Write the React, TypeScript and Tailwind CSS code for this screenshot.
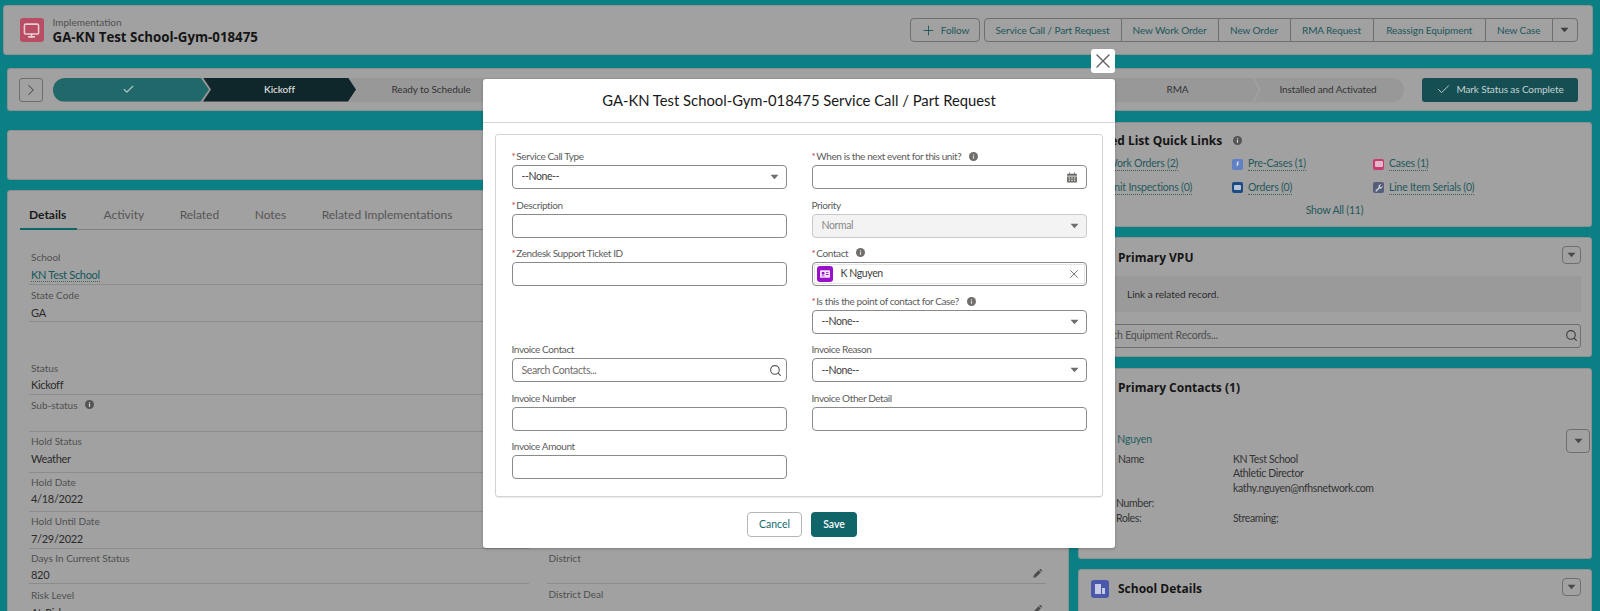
import React from "react";
import { Check, ChevronRight, Monitor, Plus, Search, X } from "lucide-react";

const Caret = ({ className = "" }: { className?: string }) => (
  <svg viewBox="0 0 10 6" className={`h-[6px] w-[9px] ${className}`} fill="currentColor">
    <path d="M0.6 0.4h8.8L5 5.6z" />
  </svg>
);

const InfoDot = ({ className = "" }: { className?: string }) => (
  <svg viewBox="0 0 12 12" className={`h-[9px] w-[9px] shrink-0 ${className}`}>
    <circle cx="6" cy="6" r="6" fill="currentColor" />
    <rect x="5.2" y="5.2" width="1.6" height="3.8" fill="#d8d8d8" />
    <rect x="5.2" y="3" width="1.6" height="1.5" fill="#d8d8d8" />
  </svg>
);

const Pencil = () => (
  <svg viewBox="0 0 12 12" className="h-[10px] w-[10px] text-[#4a4a4a]" fill="currentColor">
    <path d="M8.6 0.8l2.6 2.6-1.2 1.2-2.6-2.6zM6.7 2.7l2.6 2.6L3.4 11.2 0.4 11.8l.6-3z" />
  </svg>
);

const CalendarIcon = () => (
  <svg viewBox="0 0 12 12" className="h-[11px] w-[10px] text-[#706e6b]" fill="currentColor">
    <path d="M2.5 0h1.2v1.4h4.6V0h1.2v1.4H11a1 1 0 0 1 1 1V4H0V2.4a1 1 0 0 1 1-1h1.5z" />
    <path d="M0 4.8h12V11a1 1 0 0 1-1 1H1a1 1 0 0 1-1-1zm2 1.2v1.3h1.6V6zm3.2 0v1.3h1.6V6zm3.2 0v1.3H10V6zM2 8.6v1.3h1.6V8.6zm3.2 0v1.3h1.6V8.6zm3.2 0v1.3H10V8.6z" fillRule="evenodd" />
  </svg>
);

const MenuButton = ({ className }: { className: string }) => (
  <button className={`flex items-center justify-center rounded-[4px] border border-[#6e6e6e] text-[#4a4a4a] ${className}`}>
    <Caret />
  </button>
);

const Field = ({ label, value, info, link, pencil, h, top = "pt-[3px]" }: { label: string; value?: string; info?: boolean; link?: boolean; pencil?: boolean; h: string; top?: string }) => (
  <div className={`relative border-b border-[#8c8c8c] px-[2px] ${h} ${top}`}>
    <div className="flex items-center gap-[7px] text-[10px] leading-[14px] text-[#4f4f4f]">
      {label}
      {info && <InfoDot className="text-[#555555]" />}
    </div>
    {value && (
      <div className={`mt-[2.5px] text-[11px] leading-[16px] tracking-[-0.3px] ${link ? "text-[#12585c]" : "text-[#2b2b2b]"}`}>
        <span className={link ? "border-b border-dotted border-[#3e5f60]" : ""}>{value}</span>
      </div>
    )}
    {pencil && (
      <span className="absolute right-[3px] bottom-[5px]">
        <Pencil />
      </span>
    )}
  </div>
);

const QuickLink = ({ color, label, glyph }: { color: string; label: string; glyph: React.ReactNode }) => (
  <div className="flex h-[23.5px] items-center gap-[5px]">
    <span className={`flex h-[11px] w-[11px] shrink-0 items-center justify-center rounded-[2px] ${color}`}>{glyph}</span>
    <span className="border-b border-dotted border-[#3e5f60] text-[10.5px] leading-[13px] tracking-[-0.2px] text-[#25585b]">{label}</span>
  </div>
);

const FormLabel = ({ text, required, info }: { text: string; required?: boolean; info?: boolean }) => (
  <div className="flex h-[24.3px] items-end pb-[3px] text-[10px] leading-[12px] tracking-[-0.4px] text-[#5c5c5c]">
    {required && <span className="mr-[1px] text-[#c23934]">*</span>}
    {text}
    {info && <InfoDot className="mb-[1.5px] ml-[8px] text-[#706e6b]" />}
  </div>
);

const TextInput = () => <div className="h-[24px] rounded-[4px] border border-[#8a8a8a] bg-white" />;

const SelectInput = ({ value, disabled }: { value: string; disabled?: boolean }) => (
  <div className={`flex h-[24px] items-center justify-between rounded-[4px] border pr-[7px] pl-[9px] text-[10.5px] tracking-[-0.4px] ${disabled ? "border-[#c9c9c9] bg-[#f3f3f3] text-[#8a8a8a]" : "border-[#8a8a8a] bg-white text-[#3e3e3c]"}`}>
    {value}
    <Caret className="text-[#706e6b]" />
  </div>
);

const FormField = ({ label, required, info, children }: { label: string; required?: boolean; info?: boolean; children: React.ReactNode }) => (
  <div className="h-[48.3px]">
    <FormLabel text={label} required={required} info={info} />
    {children}
  </div>
);

const actions = [
  { label: "Service Call / Part Request", w: "w-[137px]" },
  { label: "New Work Order", w: "w-[97px]" },
  { label: "New Order", w: "w-[72px]" },
  { label: "RMA Request", w: "w-[83px]" },
  { label: "Reassign Equipment", w: "w-[112.5px]" },
  { label: "New Case", w: "w-[66.5px]" },
];

const Modal = () => (
  <div className="absolute top-[79px] left-[483px] w-[632px]">
    <button className="absolute -top-[30px] right-0 flex h-[24px] w-[24px] items-center justify-center rounded-[3px] bg-white text-[#5f5f5f]">
      <X className="h-[24px] w-[24px] shrink-0" strokeWidth={1.4} />
    </button>
    <div className="h-[469px] rounded-[3px] bg-white shadow-[0_1px_3px_rgba(0,0,0,0.25)]">
      <div className="flex h-[43.5px] items-center justify-center border-b border-[#d4d4d4] text-[14.8px] text-[#181818]">
        GA-KN Test School-Gym-018475 Service Call / Part Request
      </div>
      <div className="mx-[12px] mt-[11.5px] h-[363px] rounded-[3px] border border-[#d4d4d4] pt-[6px] pr-[15px] pl-[15.5px] shadow-[0_1px_1px_rgba(0,0,0,0.08)]">
        <div className="grid grid-cols-2 gap-x-[24.5px]">
          <FormField label="Service Call Type" required>
            <SelectInput value="--None--" />
          </FormField>
          <FormField label="When is the next event for this unit?" required info>
            <div className="flex h-[24px] items-center justify-end rounded-[4px] border border-[#8a8a8a] pr-[9px]">
              <CalendarIcon />
            </div>
          </FormField>
          <FormField label="Description" required>
            <TextInput />
          </FormField>
          <FormField label="Priority">
            <SelectInput value="Normal" disabled />
          </FormField>
          <FormField label="Zendesk Support Ticket ID" required>
            <TextInput />
          </FormField>
          <FormField label="Contact" required info>
            <div className="flex h-[24px] items-center rounded-[4px] border border-[#8a8a8a] p-[1px]">
              <div className="flex h-full flex-1 items-center border border-[#e5e5e5] pr-[3px] pl-[2px] text-[10.5px] tracking-[-0.4px] text-[#3e3e3c]">
                <span className="flex h-[16px] w-[16px] items-center justify-center rounded-[3px] bg-[#9a10c9]">
                  <svg viewBox="0 0 12 9" className="h-[8px] w-[10px]" fill="#f2e3f7">
                    <path d="M1 0h10a1 1 0 0 1 1 1v7a1 1 0 0 1-1 1H1a1 1 0 0 1-1-1V1a1 1 0 0 1 1-1zm1.2 2v3h3V2zm5 .4v1h3v-1zm0 2.2v1h3v-1zM2 6.2v1h3.5v-1z" fillRule="evenodd" />
                  </svg>
                </span>
                <span className="ml-[8px] flex-1">K Nguyen</span>
                <X className="h-[14px] w-[14px] text-[#706e6b]" strokeWidth={1.6} />
              </div>
            </div>
          </FormField>
          <div />
          <FormField label="Is this the point of contact for Case?" required info>
            <SelectInput value="--None--" />
          </FormField>
          <FormField label="Invoice Contact">
            <div className="flex h-[24px] items-center justify-between rounded-[4px] border border-[#8a8a8a] pr-[4px] pl-[9px] text-[10.5px] tracking-[-0.4px] text-[#706e6b]">
              Search Contacts...
              <Search className="h-[13px] w-[13px] text-[#555555]" strokeWidth={2} />
            </div>
          </FormField>
          <FormField label="Invoice Reason">
            <SelectInput value="--None--" />
          </FormField>
          <FormField label="Invoice Number">
            <TextInput />
          </FormField>
          <FormField label="Invoice Other Detail">
            <TextInput />
          </FormField>
          <FormField label="Invoice Amount">
            <TextInput />
          </FormField>
        </div>
      </div>
      <div className="mt-[15px] flex justify-center gap-[9.5px] pl-[6px]">
        <button className="h-[25px] w-[54.5px] rounded-[4px] border border-[#b5b5b5] text-[10.5px] text-[#146a6e]">Cancel</button>
        <button className="h-[25px] w-[45.5px] rounded-[4px] bg-[#0f6568] text-[10.5px] font-semibold text-white">Save</button>
      </div>
    </div>
  </div>
);

export default function App() {
  return (
    <div className="relative h-[611px] overflow-hidden bg-[#0a8085] font-['Lato',sans-serif]">
      {/* record header */}
      <div className="mr-[7px] ml-[3px] pt-[5px]">
        <div className="flex h-[50px] items-center justify-between rounded-[3px] border border-[#8f8f8f] bg-[#a1a1a1] pr-[14.5px] pl-[15.5px]">
          <div className="flex items-center gap-[9px]">
            <span className="flex h-[24px] w-[24px] items-center justify-center rounded-[3px] bg-[#b84d63]">
              <Monitor className="h-[17px] w-[17px] text-[#e6cfd4]" strokeWidth={2.2} />
            </span>
            <div>
              <div className="text-[10px] leading-[14px] text-[#4f4f4f]">Implementation</div>
              <div className="font-['Open_Sans',sans-serif] text-[13.3px] leading-[16px] font-bold text-[#151515]">GA-KN Test School-Gym-018475</div>
            </div>
          </div>
          <div className="flex h-[24px] items-stretch text-[10px] tracking-[-0.1px] text-[#205659]">
            <button className="mr-[3.5px] flex w-[70px] items-center justify-center gap-[5px] rounded-[4px] border border-[#6e6e6e]">
              <Plus className="h-[15px] w-[15px]" strokeWidth={1.5} />
              Follow
            </button>
            <div className="flex rounded-[4px] border border-[#6e6e6e]">
              {actions.map((a) => (
                <button key={a.label} className={`border-r border-[#6e6e6e] ${a.w}`}>
                  {a.label}
                </button>
              ))}
              <button className="flex w-[24px] items-center justify-center text-[#3f3f3f]">
                <Caret />
              </button>
            </div>
          </div>
        </div>
      </div>

      {/* status path */}
      <div className="mt-[13px] mr-[8px] ml-[7px]">
        <div className="flex h-[43px] items-center rounded-[3px] border border-[#8f8f8f] bg-[#a1a1a1] pr-[13px] pl-[11px]">
          <button className="flex h-[24px] w-[24px] items-center justify-center rounded-[3px] border border-[#6e6e6e] text-[#4a4a4a]">
            <ChevronRight className="h-[18px] w-[18px]" strokeWidth={1.4} />
          </button>
          <div className="ml-[9.5px] flex h-[24px] w-[1351px] overflow-hidden rounded-full bg-[#989898] text-[10px] tracking-[-0.1px]">
            <div className="flex w-[156.5px] shrink-0 items-center justify-center bg-[#20686a] pr-[4px] text-[#b6cccc] [clip-path:polygon(0_0,148px_0,156.5px_50%,148px_100%,0_100%)]">
              <Check className="h-[13px] w-[13px]" strokeWidth={2} />
            </div>
            <div className="-ml-[6px] flex w-[153px] shrink-0 items-center justify-center bg-[#0f272b] font-semibold text-[#d8d8d8] [clip-path:polygon(0_0,145px_0,153px_50%,145px_100%,0_100%,8px_50%)]">
              Kickoff
            </div>
            <div className="flex w-[150px] shrink-0 items-center justify-center text-[#333333]">Ready to Schedule</div>
            <div className="flex-1" />
            <div className="flex w-[150px] shrink-0 items-center justify-center text-[#333333]">RMA</div>
            <div className="relative flex w-[151px] shrink-0 items-center justify-center text-[#333333]">
              <span className="absolute top-0 left-0 h-full w-[8px] bg-[#a1a1a1] [clip-path:polygon(0_0,2px_0,8px_50%,2px_100%,0_100%,6px_50%)]" />
              Installed and Activated
            </div>
          </div>
          <button className="ml-auto flex h-[24px] w-[156px] items-center justify-center gap-[5px] rounded-[3px] bg-[#164f53] text-[10px] tracking-[-0.1px] text-[#c5d2d2]">
            <Check className="h-[15px] w-[15px]" strokeWidth={1.5} />
            Mark Status as Complete
          </button>
        </div>
      </div>

      <div className="mt-[10.5px] mr-[8px] ml-[7px] flex gap-[9px]">
        {/* left column */}
        <div className="w-[1062px] shrink-0 pt-[8.5px]">
          <div className="h-[50px] rounded-[3px] border border-[#8f8f8f] bg-[#a1a1a1]" />
          <div className="mt-[10px] h-[500px] rounded-[3px] border border-[#8f8f8f] bg-[#a1a1a1] px-[12px] pt-[12px]">
            <div className="flex h-[27px] items-start gap-[35.5px] border-b border-[#808080] pt-[4px] text-[12px] leading-[16px] text-[#555555]">
              <span className="h-[23px] w-[57px] border-b-[2px] border-[#0f6568] pl-[9px] font-bold text-[#1a1a1a]">Details</span>
              <span className="-ml-[9px]">Activity</span>
              <span>Related</span>
              <span>Notes</span>
              <span>Related Implementations</span>
            </div>
            <div className="mt-[15px] grid grid-cols-2 gap-x-[18px] pr-[10px] pl-[9px]">
              <div>
                <Field h="h-[40px]" top="pt-[5px]" label="School" value="KN Test School" link />
                <Field h="h-[36.5px]" label="State Code" value="GA" />
                <div className="h-[34px]" />
                <Field h="h-[39px]" top="pt-[5px]" label="Status" value="Kickoff" />
                <Field h="h-[37.5px]" label="Sub-status" info />
                <Field h="h-[40.5px]" top="pt-[2px]" label="Hold Status" value="Weather" />
                <Field h="h-[39px]" top="pt-[2px]" label="Hold Date" value="4/18/2022" />
                <Field h="h-[37px]" top="pt-[2.5px]" label="Hold Until Date" value="7/29/2022" />
                <Field h="h-[35.5px]" top="pt-[2px]" label="Days In Current Status" value="820" />
                <Field h="h-[36px]" top="pt-[4px]" label="Risk Level" value="At-Risk" />
              </div>
              <div className="pt-[303px]">
                <Field h="h-[35.5px]" label="District" pencil />
                <Field h="h-[36px]" label="District Deal" pencil />
              </div>
            </div>
          </div>
        </div>

        {/* right column */}
        <div className="flex-1">
          <div className="h-[105px] rounded-[3px] border border-[#8f8f8f] bg-[#a1a1a1] pt-[9px] pl-[12px]">
            <div className="-ml-[12px] flex items-center gap-[11px] font-['Open_Sans',sans-serif] text-[12px] leading-[18px] font-bold text-[#151515]">
              Related List Quick Links
              <InfoDot className="text-[#555555]" />
            </div>
            <div className="mt-[3px] grid grid-cols-[141px_141px_1fr]">
              <QuickLink color="bg-[#3f6b8e]" label="Work Orders (2)" glyph={null} />
              <QuickLink color="bg-[#5f80c4]" label="Pre-Cases (1)" glyph={<span className="h-[6px] w-[3px] bg-[#d6dcec] [clip-path:polygon(60%_0,100%_0,70%_40%,100%_40%,20%_100%,40%_55%,0_55%)]" />} />
              <QuickLink color="bg-[#c93a72]" label="Cases (1)" glyph={<span className="h-[6px] w-[8px] rounded-[1px] bg-[#e2b8c8]" />} />
              <QuickLink color="bg-[#3f6b8e]" label="Unit Inspections (0)" glyph={null} />
              <QuickLink color="bg-[#1d4c84]" label="Orders (0)" glyph={<span className="h-[5px] w-[7px] rounded-[1px] bg-[#b8c5d6]" />} />
              <QuickLink color="bg-[#565e7c]" label="Line Item Serials (0)" glyph={<svg viewBox="0 0 12 12" className="h-[8px] w-[8px]" fill="#cdd0da"><path d="M11.5 3.4a3.4 3.4 0 0 1-4.6 3.2L2.8 11a1.2 1.2 0 0 1-1.8-1.8l4.4-4.1A3.4 3.4 0 0 1 9.4.6L7.4 2.7l.4 1.7 1.7.4 2-2z" /></svg>} />
            </div>
            <div className="mt-[3px] pr-[13px] text-center text-[10.5px] tracking-[-0.2px] text-[#25585b]">Show All (11)</div>
          </div>

          <div className="relative mt-[10.5px] h-[120px] rounded-[3px] border border-[#8f8f8f] bg-[#a1a1a1] px-[10px] pt-[11px]">
            <div className="pl-[29px] font-['Open_Sans',sans-serif] text-[12px] leading-[18px] font-bold text-[#151515]">Primary VPU</div>
            <MenuButton className="absolute top-[7.5px] right-[10px] h-[18px] w-[19px]" />
            <div className="mt-[9px] flex h-[36px] items-center bg-[#9a9a9a] pl-[38px] text-[10px] text-[#2b2b2b]">Link a related record.</div>
            <div className="mt-[11.5px] flex h-[24px] items-center justify-between rounded-[3px] border border-[#6e6e6e] pr-[2px] pl-[3px] text-[10.5px] tracking-[-0.2px] text-[#4f4f4f]">
              Search Equipment Records...
              <Search className="h-[13px] w-[13px] text-[#3a3a3a]" strokeWidth={2} />
            </div>
          </div>

          <div className="relative mt-[10.5px] h-[191px] rounded-[3px] border border-[#8f8f8f] bg-[#a1a1a1] pt-[10px] pl-[39px]">
            <div className="font-['Open_Sans',sans-serif] text-[12px] leading-[18px] font-bold text-[#151515]">Primary Contacts (1)</div>
            <MenuButton className="absolute top-[60px] right-[1px] h-[24px] w-[24px]" />
            <div className="mt-[34px] -ml-[10px] text-[10.5px] leading-[16px] tracking-[-0.2px] text-[#1e5c5f]">K Nguyen</div>
            <div className="mt-[5px] grid grid-cols-[115px_1fr] text-[10.5px] leading-[14.8px] tracking-[-0.35px] text-[#333333]">
              <div>Name</div>
              <div>
                KN Test School
                <br />
                Athletic Director
                <br />
                kathy.nguyen@nfhsnetwork.com
              </div>
              <div className="-ml-[2px]">Number:</div>
              <div />
              <div className="-ml-[2px]">Roles:</div>
              <div>Streaming;</div>
            </div>
          </div>

          <div className="relative mt-[10px] h-[60px] rounded-[3px] border border-[#8f8f8f] bg-[#a1a1a1] pt-[10px] pl-[12px]">
            <div className="flex items-center gap-[9px] font-['Open_Sans',sans-serif] text-[12px] font-bold text-[#151515]">
              <span className="flex h-[18px] w-[18px] items-center justify-center rounded-[3px] bg-[#4b57ab]">
                <svg viewBox="0 0 12 12" className="h-[12px] w-[12px]" fill="#c6cae3">
                  <path d="M1 1h6v10H1zM8 5h3v6H8z" />
                </svg>
              </span>
              School Details
            </div>
            <MenuButton className="absolute top-[8px] right-[10px] h-[18px] w-[19px]" />
          </div>
        </div>
      </div>

      <Modal />
    </div>
  );
}
